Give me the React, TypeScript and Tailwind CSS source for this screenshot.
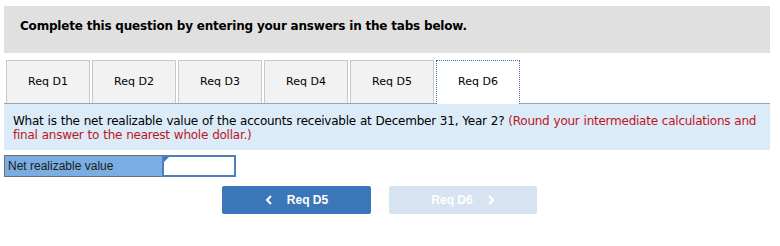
import React from 'react'

const tabs = ['Req D1', 'Req D2', 'Req D3', 'Req D4', 'Req D5', 'Req D6']

export default function App() {
    return (
        <div className="w-[780px] h-[246px] bg-white pt-[6px] pl-[4px]" style={{ fontFamily: 'Verdana, "DejaVu Sans", sans-serif' }}>
            <div className="w-[766px] h-[47px] bg-[#e0e0e0] flex items-center pl-[16px] pb-[8px]">
                <p className="text-[12px] font-bold text-black tracking-[-0.2px]">
                    Complete this question by entering your answers in the tabs below.
                </p>
            </div>

            <div className="w-[766px] mt-[7px] flex gap-[2px] pl-[2px] border-b border-[#9aa4ae] h-[44px]">
                {tabs.map((t, i) =>
                    i === 5 ? (
                        <div
                            key={t}
                            className="w-[84px] h-[44px] -mb-px bg-white border border-dotted border-[#3d6fa8] border-b-0 flex items-center justify-center text-[11px] text-black"
                        >
                            {t}
                        </div>
                    ) : (
                        <div
                            key={t}
                            className="w-[84px] h-[43px] bg-[#f2f2f2] border border-[#c8c8c8] border-b-0 flex items-center justify-center text-[11px] text-black"
                        >
                            {t}
                        </div>
                    )
                )}
            </div>

            <div className="w-[766px] h-[46px] bg-[#dbebf8] pl-[9px] pr-[4px] pt-[10px] text-[12px] leading-[14px] tracking-[-0.25px] [word-spacing:0.5px] text-black">
                What is the net realizable value of the accounts receivable at December 31, Year 2?{' '}
                <span className="text-[#c0141c]">
                    (Round your intermediate calculations and final answer to the nearest whole dollar.)
                </span>
            </div>

            <div className="mt-[5px] flex h-[22px] w-[232px]">
                <div className="w-[158px] h-[22px] bg-[#7aaee3] border border-[#707070] border-r-0 flex items-center pl-[3px] text-[12px] text-[#1a1a1a]" style={{ fontFamily: '"Liberation Sans", Arial, sans-serif' }}>
                    Net realizable value
                </div>
                <div className="relative w-[74px] h-[22px] bg-white border-2 border-[#4f7fb8]">
                    <div className="absolute left-0 top-0 w-0 h-0 border-t-[5px] border-t-[#3c78c0] border-r-[5px] border-r-transparent" />
                </div>
            </div>

            <div className="mt-[9px] flex gap-[18px] pl-[218px]" style={{ fontFamily: '"Liberation Sans", Arial, sans-serif' }}>
                <button className="w-[149px] h-[28px] bg-[#3a76b8] rounded-[2px] flex items-center justify-center gap-[14px] text-white text-[12px] font-bold">
                    <svg width="8" height="10" viewBox="0 0 8 10" fill="none">
                        <path d="M6 1 L2 5 L6 9" stroke="white" strokeWidth="2" />
                    </svg>
                    Req D5
                </button>
                <button className="w-[148px] h-[28px] bg-[#d7e3f1] rounded-[2px] flex items-center justify-center gap-[14px] text-white text-[12px] font-bold">
                    Req D6
                    <svg width="8" height="10" viewBox="0 0 8 10" fill="none">
                        <path d="M2 1 L6 5 L2 9" stroke="white" strokeWidth="2" />
                    </svg>
                </button>
            </div>
        </div>
    )
}
